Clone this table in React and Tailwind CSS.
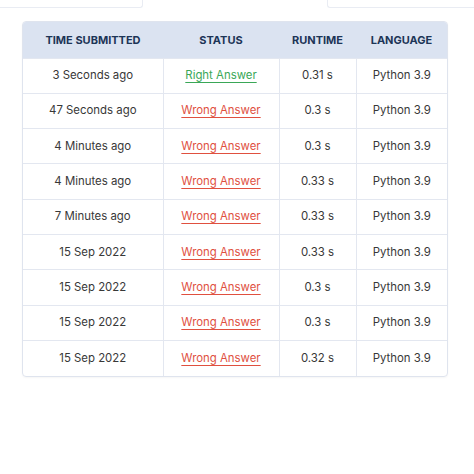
import React from 'react';

const rows = [
  { time: '3 Seconds ago', ok: true, runtime: '0.31 s' },
  { time: '47 Seconds ago', ok: false, runtime: '0.3 s' },
  { time: '4 Minutes ago', ok: false, runtime: '0.3 s' },
  { time: '4 Minutes ago', ok: false, runtime: '0.33 s' },
  { time: '7 Minutes ago', ok: false, runtime: '0.33 s' },
  { time: '15 Sep 2022', ok: false, runtime: '0.33 s' },
  { time: '15 Sep 2022', ok: false, runtime: '0.3 s' },
  { time: '15 Sep 2022', ok: false, runtime: '0.3 s' },
  { time: '15 Sep 2022', ok: false, runtime: '0.32 s' },
];

const App = () => {
  return (
    <div className="w-[474px] h-[474px] bg-white relative font-['Inter',sans-serif] overflow-hidden">
      <div className="flex justify-between h-[8px]">
        <div className="w-[143px] h-full bg-white border-r border-b border-[#e9ecf3] rounded-br-[3px]" />
        <div className="w-[147px] h-full bg-white border-l border-b border-[#e9ecf3] rounded-bl-[3px]" />
      </div>
      <div className="mt-[13px] ml-[22px] w-[426px] rounded-[4px] border border-[#dfe4ee] overflow-hidden shadow-[0_1px_2px_rgba(0,0,0,0.04)]">
        <table className="w-full border-collapse table-fixed">
          <colgroup>
            <col className="w-[140px]" />
            <col className="w-[116px]" />
            <col className="w-[77px]" />
            <col />
          </colgroup>
          <thead>
            <tr className="bg-[#dbe3f1] h-[36px]">
              <th className="text-[11px] font-bold text-[#1d3557]">TIME SUBMITTED</th>
              <th className="text-[11px] font-bold text-[#1d3557]">STATUS</th>
              <th className="text-[11px] font-bold text-[#1d3557]">RUNTIME</th>
              <th className="text-[11px] font-bold text-[#1d3557]">LANGUAGE</th>
            </tr>
          </thead>
          <tbody>
            {rows.map((r, i) => (
              <tr key={i} className="h-[35.3px] text-[11.4px] text-[#383838]">
                <td className="text-center border-t border-r border-[#e3e7f0]">{r.time}</td>
                <td className="text-center border-t border-r border-[#e3e7f0]">
                  {r.ok ? (
                    <span className="text-[#3aa757] underline underline-offset-[3px] decoration-[#3aa757]">Right Answer</span>
                  ) : (
                    <span className="text-[#e0503f] underline underline-offset-[3px] decoration-[#e0503f]">Wrong Answer</span>
                  )}
                </td>
                <td className="text-center border-t border-r border-[#e3e7f0]">{r.runtime}</td>
                <td className="text-center border-t border-[#e3e7f0]">Python 3.9</td>
              </tr>
            ))}
          </tbody>
        </table>
      </div>
    </div>
  );
};

export default App;
